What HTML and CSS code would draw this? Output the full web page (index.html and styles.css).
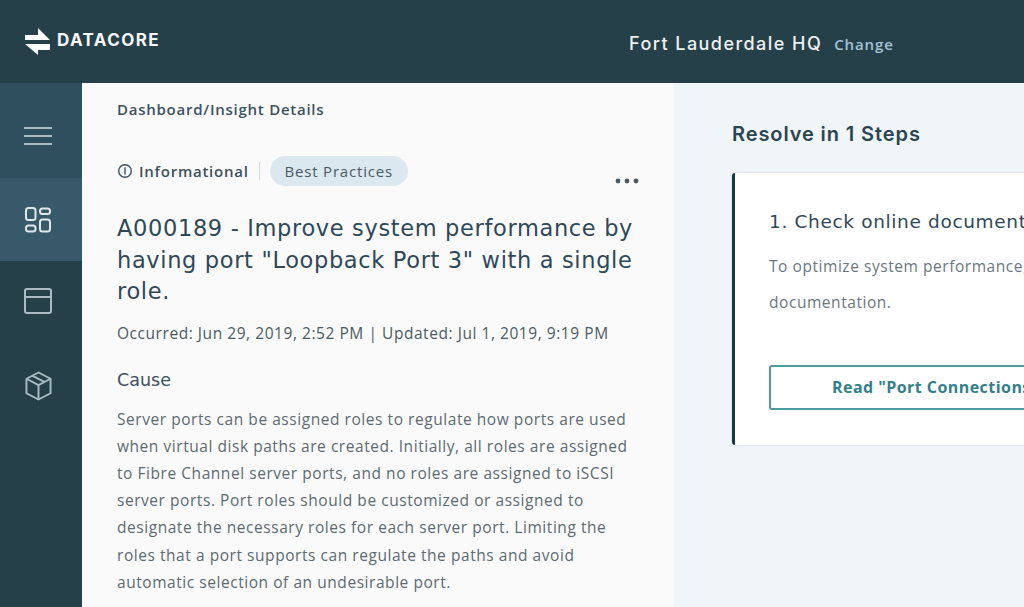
FILE: index.html
```html
<!DOCTYPE html>
<html>
<head>
<meta charset="utf-8"/>
<title>Insight Details</title>
<link rel="stylesheet" href="styles.css">
</head>
<body>

<header class="topbar">
  <div class="logo">
    <svg class="logo-mark" viewBox="0 0 25 27" width="25" height="27">
      <path d="M0 7H13V0L25 12H0Z" fill="#fff"/>
      <path d="M25 22H13V27L0 16H25Z" fill="#fff"/>
    </svg>
    <span class="logo-text">DATACORE</span>
  </div>
  <div class="site">
    <span class="site-name">Fort Lauderdale HQ</span>
    <a class="site-change">Change</a>
  </div>
</header>

<div class="main">
  <nav class="sidebar">
    <div class="nav-item nav-menu">
      <svg viewBox="0 0 28 20" width="28" height="20" class="icon">
        <path d="M0 2H28M0 10H28M0 18H28"/>
      </svg>
    </div>
    <div class="nav-item nav-active">
      <svg viewBox="0 0 26 26" width="26" height="26" class="icon bright">
        <rect x="1" y="1" width="9.5" height="12" rx="2.5"/>
        <rect x="15" y="1.5" width="10" height="5.5" rx="2.5"/>
        <rect x="1" y="18.5" width="9.5" height="6" rx="2.5"/>
        <rect x="15" y="12.5" width="10" height="12" rx="2.5"/>
      </svg>
    </div>
    <div class="nav-item nav-boxes">
      <svg viewBox="0 0 28 26" width="28" height="26" class="icon">
        <rect x="1" y="1" width="26" height="24" rx="2"/>
        <path d="M1 9H27"/>
      </svg>
    </div>
    <div class="nav-item nav-cube">
      <svg viewBox="0 0 28 31" width="27" height="30" class="icon">
        <path d="M14 1.5L26.5 8V23L14 29.5L1.5 23V8Z"/>
        <path d="M1.5 8L14 14.5L26.5 8M14 14.5V29.5M7.5 4.7L20 11.2"/>
      </svg>
    </div>
  </nav>

  <section class="details">
    <div class="crumb">Dashboard/Insight Details</div>
    <div class="meta-row">
      <svg class="info-icon" viewBox="0 0 16 16" width="16" height="16">
        <circle cx="8" cy="8" r="6.3"/>
        <path d="M8 4.5V11.5"/>
      </svg>
      <span class="severity">Informational</span>
      <span class="divider"></span>
      <span class="tag">Best Practices</span>
      <svg class="more" viewBox="0 0 24 6" width="24" height="6">
        <circle cx="3" cy="3" r="2.4"/>
        <circle cx="12" cy="3" r="2.4"/>
        <circle cx="21" cy="3" r="2.4"/>
      </svg>
    </div>
    <h1>A000189 - Improve system performance by having port "Loopback Port 3" with a single role.</h1>
    <p class="dates">Occurred: Jun 29, 2019, 2:52 PM | Updated: Jul 1, 2019, 9:19 PM</p>
    <h2>Cause</h2>
    <p class="cause">Server ports can be assigned roles to regulate how ports are used when virtual disk paths are created. Initially, all roles are assigned to Fibre Channel server ports, and no roles are assigned to iSCSI server ports. Port roles should be customized or assigned to designate the necessary roles for each server port. Limiting the roles that a port supports can regulate the paths and avoid automatic selection of an undesirable port.</p>
  </section>

  <section class="resolve">
    <h2 class="resolve-title">Resolve in 1 Steps</h2>
    <div class="step-card">
      <h3>1. Check online documentation</h3>
      <p>To optimize system performance, read the following section in the online documentation.</p>
      <a class="step-btn">Read "Port Connections" in the online documentation</a>
    </div>
  </section>
</div>

</body>
</html>
```

FILE: styles.css
```css
html, body {
  margin: 0;
  padding: 0;
  height: 100%;
  overflow: hidden;
}

body {
  display: flex;
  flex-direction: column;
  font-family: "Open Sans", sans-serif;
  color: #2b4352;
}

.topbar {
  flex: 0 0 83px;
  background: #264049;
  display: flex;
  align-items: center;
}

.logo {
  display: flex;
  align-items: center;
  margin-left: 25px;
  width: 604px;
}

.logo-mark {
  display: block;
}

.logo-text {
  margin: -3px 0 0 7px;
  font-family: Inter, sans-serif;
  font-weight: 700;
  font-size: 17px;
  letter-spacing: 1.4px;
  color: #f4f6f7;
}

.site {
  display: flex;
  align-items: baseline;
  margin-top: 4px;
}

.site-name {
  font-family: Inter, sans-serif;
  font-weight: 500;
  font-size: 18px;
  letter-spacing: 1.45px;
  color: #eef1f2;
}

.site-change {
  margin-left: 12px;
  font-size: 15px;
  font-weight: 600;
  letter-spacing: 0.9px;
  color: #a3c3d8;
}

.main {
  flex: 1;
  display: flex;
  min-height: 0;
}

.sidebar {
  flex: 0 0 82px;
  background: #264049;
  display: flex;
  flex-direction: column;
}

.nav-item {
  height: 83px;
  padding-right: 6px;
  display: flex;
  align-items: center;
  justify-content: center;
}

.nav-menu {
  height: 85px;
  padding-top: 10px;
  background: #2f4f5f;
}

.nav-active {
  background: #38596a;
}

.nav-boxes {
  height: 80px;
}

.nav-cube {
  height: 90px;
}

.icon {
  fill: none;
  stroke: #a9bcc4;
  stroke-width: 2;
  stroke-linejoin: round;
}

.icon.bright {
  stroke: #dfe7ea;
}

.details {
  flex: 0 0 592px;
  box-sizing: border-box;
  background: #fafafa;
  padding: 16px 35px 0 35px;
}

.crumb {
  font-size: 15px;
  font-weight: 600;
  letter-spacing: 0.75px;
  line-height: 20px;
  color: #3b5260;
}

.meta-row {
  display: flex;
  align-items: center;
  margin-top: 37px;
  height: 30px;
  position: relative;
}

.info-icon {
  fill: none;
  stroke: #3b5260;
  stroke-width: 1.4;
  margin-right: 6px;
}

.severity {
  font-size: 15px;
  font-weight: 600;
  letter-spacing: 0.75px;
  color: #3b5260;
}

.divider {
  width: 1px;
  height: 18px;
  background: #d5d9db;
  margin: 0 10px;
}

.tag {
  background: #dbe8f0;
  border-radius: 15px;
  padding: 0 15px;
  line-height: 30px;
  font-size: 15px;
  letter-spacing: 0.8px;
  color: #4a5a64;
}

.more {
  position: absolute;
  right: 0;
  top: 22px;
  fill: #4a5a64;
}

h1 {
  margin: 27px 0 0;
  font-family: "DejaVu Sans", sans-serif;
  font-weight: 400;
  font-size: 22.5px;
  letter-spacing: 0.65px;
  line-height: 31.5px;
  color: #2f4858;
}

.dates {
  margin: 15px 0 0;
  font-size: 15.5px;
  letter-spacing: 0.55px;
  line-height: 20px;
  color: #4a5a64;
}

.details h2 {
  margin: 26px 0 0;
  font-family: "DejaVu Sans", sans-serif;
  font-weight: 400;
  font-size: 17.5px;
  line-height: 22px;
  color: #3b5260;
}

.cause {
  margin: 15px 0 0;
  font-size: 15.5px;
  letter-spacing: 0.55px;
  line-height: 27.2px;
  color: #5c6a72;
}

.resolve {
  flex: 1;
  min-width: 0;
  background: #f0f5fa;
  padding: 38px 0 0 58px;
}

.resolve-title {
  margin: 0;
  font-family: Inter, sans-serif;
  font-weight: 600;
  font-size: 20px;
  letter-spacing: 0.9px;
  line-height: 26px;
  color: #2c4450;
}

.step-card {
  box-sizing: border-box;
  width: 680px;
  height: 272px;
  margin-top: 26px;
  background: #fff;
  border-left: 3px solid #12394a;
  border-radius: 3px;
  box-shadow: 0 0 3px rgba(60, 90, 110, 0.2);
  padding: 37px 0 0 34px;
}

.step-card h3 {
  margin: 0;
  font-family: "DejaVu Sans", sans-serif;
  font-weight: 400;
  font-size: 18.5px;
  letter-spacing: 0.65px;
  line-height: 24px;
  color: #2f4858;
  white-space: nowrap;
}

.step-card p {
  margin: 14px 0 0;
  width: 610px;
  font-size: 15.5px;
  letter-spacing: 0.55px;
  line-height: 36px;
  color: #6a777f;
}

.step-btn {
  display: block;
  box-sizing: border-box;
  width: 610px;
  height: 45px;
  margin-top: 45px;
  border: 2px solid #4d9a9c;
  border-radius: 3px;
  font-size: 16px;
  font-weight: 700;
  letter-spacing: 0.45px;
  line-height: 41px;
  padding-left: 61px;
  color: #33808a;
  white-space: nowrap;
}
```
